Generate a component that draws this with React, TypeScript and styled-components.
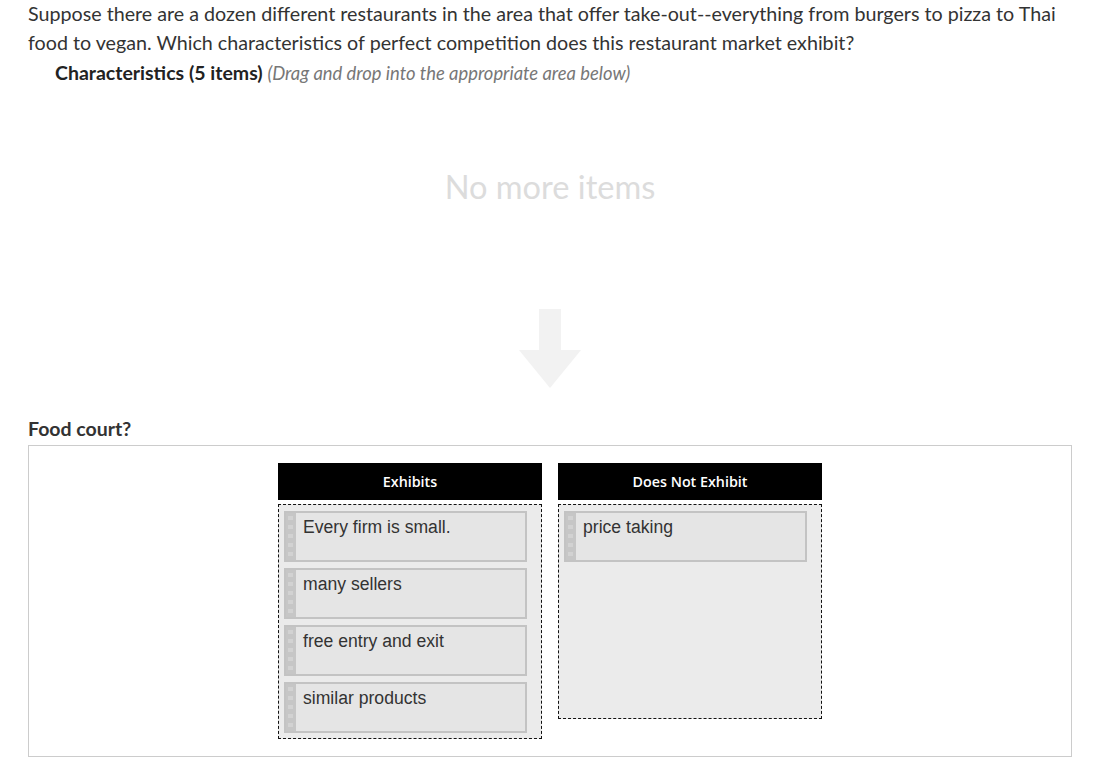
import styled, { createGlobalStyle } from 'styled-components'

const GlobalStyle = createGlobalStyle`
    html, body {
        margin: 0;
        padding: 0;
        background: #fff;
    }
    body {
        font-family: Lato, "Open Sans", sans-serif;
        color: #333;
    }
`;

const Page = styled.div`
    padding: 0 28px;
    width: 1044px;
`;

const Question = styled.p`
    margin: -1px 0 0 0;
    font-size: 19.7px;
    line-height: 29px;
    color: #333;
`;

const PoolTitle = styled.div`
    margin: 2px 0 0 27px;
    font-size: 19.5px;
    line-height: 28px;
    font-weight: bold;
    color: #222;
`;

const Hint = styled.span`
    font-weight: normal;
    font-style: italic;
    font-size: 18.4px;
    color: #777;
`;

const Pool = styled.div`
    display: flex;
    flex-direction: column;
    align-items: center;
    padding-top: 80px;
`;

const NoMore = styled.div`
    font-size: 32.6px;
    line-height: 40px;
    color: #dcdcdc;
`;

const Arrow = styled.svg`
    display: block;
    margin-top: 102px;
`;

const SectionLabel = styled.h3`
    margin: 29px 0 4px 0;
    font-size: 19.5px;
    line-height: 24px;
    font-weight: bold;
    color: #333;
`;

const Board = styled.div`
    border: 1px solid #ccc;
    padding: 17px 0 17px 0;
    display: flex;
    justify-content: center;
    align-items: flex-start;
    gap: 16px;
`;

const Column = styled.div`
    width: 264px;
    display: flex;
    flex-direction: column;
    gap: 4px;
`;

const ColumnHeader = styled.div`
    height: 37px;
    background: #000;
    color: #fff;
    font-family: "Open Sans", "DejaVu Sans", sans-serif;
    font-size: 14.3px;
    font-weight: 600;
    display: flex;
    align-items: center;
    justify-content: center;
`;

const DropArea = styled.div<{ $minHeight: number }>`
    border: 1px dashed #111;
    background: #ebebeb;
    padding: 6px 14px 5px 5px;
    min-height: ${p => p.$minHeight}px;
    box-sizing: border-box;
    display: flex;
    flex-direction: column;
    gap: 6px;
`;

const Card = styled.div`
    height: 51px;
    box-sizing: border-box;
    border: 2px solid #c3c3c3;
    background: #e5e5e5;
    display: flex;
`;

const Grip = styled.div`
    width: 10px;
    flex-shrink: 0;
    background-color: #c6c6c6;
    background-image: repeating-linear-gradient(
        to bottom,
        transparent 0px,
        transparent 3px,
        #d2d2d2 3px,
        #d2d2d2 7px,
        transparent 7px,
        transparent 9px
    );
    background-size: 5px 100%;
    background-position: 2px 0;
    background-repeat: no-repeat;
`;

const CardText = styled.div`
    padding: 4px 6px 0 7px;
    font-family: "Liberation Sans", Arial, sans-serif;
    font-size: 17.6px;
    line-height: 20px;
    color: #333;
`;

const columns = [
    { title: 'Exhibits', minHeight: 235, items: ['Every firm is small.', 'many sellers', 'free entry and exit', 'similar products'] },
    { title: 'Does Not Exhibit', minHeight: 215, items: ['price taking'] },
];

const App = () => {
    return (
        <Page>
            <GlobalStyle />
            <Question>
                Suppose there are a dozen different restaurants in the area that offer take-out--everything from burgers to pizza to Thai food to vegan. Which characteristics of perfect competition does this restaurant market exhibit?
            </Question>
            <PoolTitle>
                Characteristics (5 items) <Hint>(Drag and drop into the appropriate area below)</Hint>
            </PoolTitle>
            <Pool>
                <NoMore>No more items</NoMore>
                <Arrow width="64" height="79" viewBox="0 0 64 79">
                    <path d="M21 0 H43 V41 H63 L32 79 L1 41 H21 Z" fill="#f2f2f2" />
                </Arrow>
            </Pool>
            <SectionLabel>Food court?</SectionLabel>
            <Board>
                {columns.map(col => (
                    <Column key={col.title}>
                        <ColumnHeader>{col.title}</ColumnHeader>
                        <DropArea $minHeight={col.minHeight}>
                            {col.items.map(item => (
                                <Card key={item}>
                                    <Grip />
                                    <CardText>{item}</CardText>
                                </Card>
                            ))}
                        </DropArea>
                    </Column>
                ))}
            </Board>
        </Page>
    )
};

export default App;
